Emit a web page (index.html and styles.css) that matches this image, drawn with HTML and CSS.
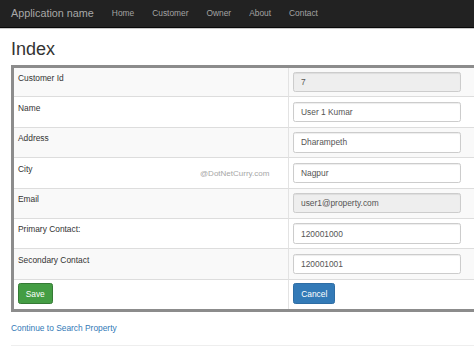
FILE: index.html
```html
<!DOCTYPE html>
<html lang="en">
<head>
    <meta charset="UTF-8">
    <title>Index</title>
    <link rel="stylesheet" href="styles.css">
</head>
<body>

<div class="navbar">
    <a class="brand" href="#">Application name</a>
    <ul class="nav">
        <li><a href="#">Home</a></li>
        <li><a href="#">Customer</a></li>
        <li><a href="#">Owner</a></li>
        <li><a href="#">About</a></li>
        <li><a href="#">Contact</a></li>
    </ul>
</div>

<div class="body_content">
    <h2>Index</h2>

    <div class="form_wrap">
        <table class="form_table">
            <tr>
                <td class="label">Customer Id</td>
                <td><input class="form_control" type="text" value="7" readonly></td>
            </tr>
            <tr>
                <td class="label">Name</td>
                <td><input class="form_control" type="text" value="User 1 Kumar"></td>
            </tr>
            <tr>
                <td class="label">Address</td>
                <td><input class="form_control" type="text" value="Dharampeth"></td>
            </tr>
            <tr>
                <td class="label">City</td>
                <td><input class="form_control" type="text" value="Nagpur"></td>
            </tr>
            <tr>
                <td class="label">Email</td>
                <td><input class="form_control" type="text" value="user1@property.com" readonly></td>
            </tr>
            <tr>
                <td class="label">Primary Contact:</td>
                <td><input class="form_control" type="text" value="120001000"></td>
            </tr>
            <tr>
                <td class="label">Secondary Contact</td>
                <td><input class="form_control" type="text" value="120001001"></td>
            </tr>
            <tr>
                <td><button class="btn btn_save" type="submit">Save</button></td>
                <td><button class="btn btn_cancel" type="button">Cancel</button></td>
            </tr>
        </table>
        <span class="watermark">@DotNetCurry.com</span>
    </div>

    <p class="back_link"><a href="#">Continue to Search Property</a></p>
    <hr>
</div>

</body>
</html>
```

FILE: styles.css
```css
* {
    box-sizing: border-box;
    margin: 0;
    padding: 0;
}

body {
    font-family: "Liberation Sans", Arial, sans-serif;
    font-size: 8.4px;
    line-height: 12px;
    color: #333;
    background-color: #fff;
}

li {
    list-style: none;
}

a {
    text-decoration: none;
}

/* top bar */
.navbar {
    display: flex;
    align-items: center;
    height: 28px;
    padding-left: 2px;
    background-color: #222;
    border-bottom: 1px solid #080808;
    box-shadow: 0 1px 0 #c9c9c9;
}

.brand {
    padding: 0 9px;
    font-size: 10.8px;
    line-height: 27px;
    color: #a8a8a8;
}

.nav {
    display: flex;
}

.nav a {
    display: block;
    padding: 0 9px;
    line-height: 27px;
    color: #a3a3a3;
}

/* page */
.body_content {
    padding-left: 11px;
    overflow: hidden;
}

h2 {
    margin: 11px 0 6px;
    font-size: 18px;
    font-weight: normal;
    line-height: 20px;
}

.form_wrap {
    position: relative;
}

.form_table {
    width: 480px;
    border: 3px solid #8c8c8c;
    border-spacing: 0;
}

.form_table td {
    padding: 4.5px 4px;
    border-top: 1px solid #ddd;
    vertical-align: top;
}

.form_table tr:first-child td {
    padding-top: 3.5px;
    border-top: 0;
}

.form_table tr:nth-child(odd) td {
    background-color: #f9f9f9;
}

.form_table tr:last-child td {
    background-color: #fff;
}

.form_table td:first-child {
    width: 274px;
}

.form_table td + td {
    border-left: 1px solid #e3e3e3;
}

.form_control {
    display: block;
    width: 168px;
    height: 20.4px;
    padding: 0 7px;
    font-family: inherit;
    font-size: 8.4px;
    color: #555;
    background-color: #fff;
    border: 1px solid #ccc;
    border-radius: 2.4px;
    box-shadow: inset 0 1px 1px rgba(0, 0, 0, .075);
}

.form_control[readonly] {
    background-color: #eee;
}

.btn {
    display: inline-block;
    padding: 3.6px 7.2px;
    font-family: inherit;
    font-size: 8.4px;
    line-height: 12px;
    color: #fff;
    border: 1px solid transparent;
    border-radius: 2.4px;
}

.btn_save {
    margin-top: -1px;
    margin-left: -0.5px;
    background-color: #449d44;
    border-color: #357a35;
}

.btn_cancel {
    margin-top: -1px;
    background-color: #337ab7;
    border-color: #2e6da4;
}

.watermark {
    position: absolute;
    left: 189px;
    top: 103px;
    font-size: 8px;
    color: #a6a6a6;
}

.back_link {
    margin-top: 10px;
}

.back_link a {
    color: #337ab7;
}

hr {
    margin-top: 11px;
    border: 0;
    border-top: 1px solid #eee;
}
```
